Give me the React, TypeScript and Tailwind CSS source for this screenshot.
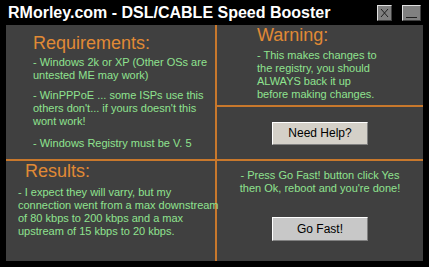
export default function App() {
  const body = "text-[11px] leading-[13px] text-[#8fe38f] whitespace-nowrap";
  const heading = "text-[18px] leading-[20px] text-[#e08a35]";
  return (
    <div className="w-[429px] h-[267px] bg-black flex flex-col overflow-hidden" style={{ fontFamily: '"Liberation Sans", Arial, sans-serif' }}>
      <div className="h-[25px] flex items-center justify-between pl-[8px] pr-[8px] shrink-0">
        <h1 className="text-white font-bold text-[16px] leading-none">RMorley.com - DSL/CABLE Speed Booster</h1>
        <div className="flex gap-[10px] mt-[1px]">
          <button className="w-[15px] h-[16px] bg-[#808080] border border-t-[#e0e0e0] border-l-[#e0e0e0] border-b-[#404040] border-r-[#404040] flex items-center justify-center">
            <svg width="9" height="10" viewBox="0 0 9 10">
              <path d="M1 1L8 9M8 1L1 9" stroke="#202020" strokeWidth="1" />
            </svg>
          </button>
          <button className="w-[19px] h-[16px] bg-[#808080] border border-t-[#e0e0e0] border-l-[#e0e0e0] border-b-[#404040] border-r-[#404040] flex items-end justify-center pb-[2px]">
            <span className="block w-[11px] h-[1px] bg-[#202020]" />
          </button>
        </div>
      </div>
      <div className="flex-1 mx-[6px] mb-[6px] bg-[#404040] flex">
        <div className="w-[211px] border-r-2 border-[#c8782c] flex flex-col">
          <div className="h-[136px] border-b-2 border-[#c8782c] pt-[8px] pl-[27px] pr-[4px]">
            <div className={heading}>Requirements:</div>
            <p className={`${body} mt-[3px]`}>- Windows 2k or XP (Other OSs are<br />untested ME may work)</p>
            <p className={`${body} mt-[7px]`}>- WinPPPoE ... some ISPs use this<br />others don't... if yours doesn't this<br />wont work!</p>
            <p className={`${body} mt-[9px]`}>- Windows Registry must be V. 5</p>
          </div>
          <div className="flex-1 pl-[12px] pr-[2px]">
            <div className={`${heading} pl-[7px]`}>Results:</div>
            <p className={`${body} mt-[5px]`}>- I expect they will varry, but my<br />connection went from a max downstream<br />of 80 kbps to 200 kbps and a max<br />upstream of 15 kbps to 20 kbps.</p>
          </div>
        </div>
        <div className="flex-1 flex flex-col">
          <div className="h-[82px] border-b-2 border-[#c8782c] pl-[40px] pr-[4px]">
            <div className={heading}>Warning:</div>
            <p className={`${body} mt-[4px]`}>- This makes changes to<br />the registry, you should<br />ALWAYS back it up<br />before making changes.</p>
          </div>
          <div className="h-[54px] border-b-2 border-[#c8782c] flex items-center justify-center">
            <button className="w-[96px] h-[23px] bg-[#d4d0c8] border border-t-white border-l-white border-b-[#808080] border-r-[#808080] text-black text-[12px]">Need Help?</button>
          </div>
          <div className="flex-1 flex flex-col items-center pt-[8px]">
            <p className={`${body} text-center`}>- Press Go Fast! button click Yes<br />then Ok, reboot and you're done!</p>
            <button className="mt-[22px] w-[96px] h-[24px] bg-[#c8c8c8] border border-t-white border-l-white border-b-[#808080] border-r-[#808080] text-black text-[12px]">Go Fast!</button>
          </div>
        </div>
      </div>
    </div>
  );
}
